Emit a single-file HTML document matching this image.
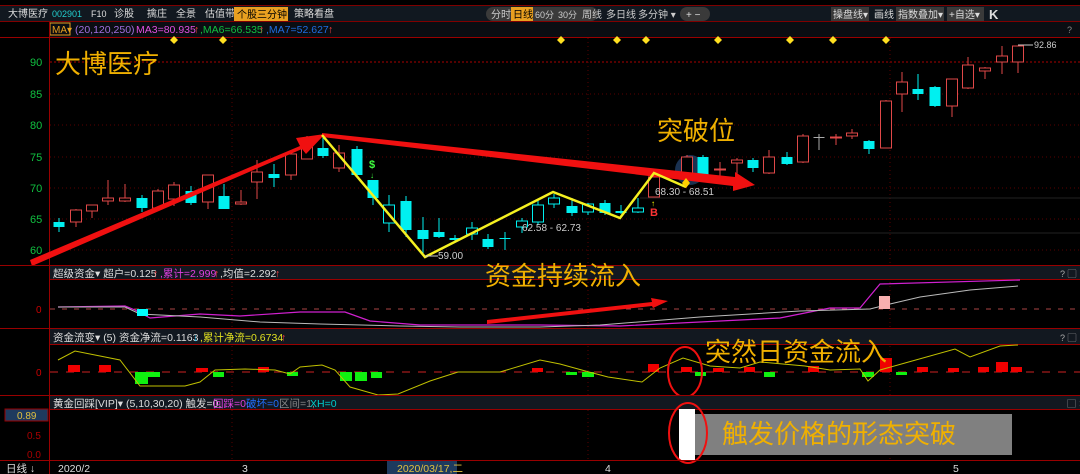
<!DOCTYPE html>
<html><head><meta charset="utf-8"><style>
body{margin:0;background:#000;width:1080px;height:474px;overflow:hidden;font-family:"Liberation Sans","Noto Sans CJK SC",sans-serif}
svg{display:block}
text{font-family:"Liberation Sans","Noto Sans CJK SC",sans-serif}
</style></head><body>
<svg width="1080" height="474" viewBox="0 0 1080 474" xmlns="http://www.w3.org/2000/svg">
<rect width="1080" height="474" fill="#000"/>
<rect x="0" y="5" width="1080" height="17" fill="#111820"/>
<line x1="0" y1="5.5" x2="1080" y2="5.5" stroke="#800000"/>
<line x1="0" y1="21.5" x2="1080" y2="21.5" stroke="#800000"/>
<g font-size="10" fill="#ddd">
<text x="8" y="17">大博医疗</text>
<text x="52" y="17" fill="#2cc" font-size="9">002901</text>
<text x="91" y="17" font-size="9">F10</text>
<text x="114" y="17">诊股</text>
<text x="147" y="17">擒庄</text>
<text x="176" y="17">全景</text>
<text x="205" y="17">估值带</text>
<rect x="234" y="7" width="54" height="14" fill="#e8a020"/>
<text x="237" y="18" fill="#000">个股三分钟</text>
<text x="294" y="17">策略看盘</text>
<rect x="486" y="7" width="112" height="14" rx="7" fill="#3a3a3a"/>
<text x="491" y="18" fill="#ccc">分时</text>
<rect x="511" y="7" width="22" height="14" fill="#e8a020"/>
<text x="513" y="18" fill="#000">日线</text>
<text x="535" y="18" fill="#ccc" font-size="9">60分</text>
<text x="558" y="18" fill="#ccc" font-size="9">30分</text>
<text x="582" y="18" fill="#ccc">周线</text>
<text x="606" y="18" fill="#ccc">多日线</text>
<text x="638" y="18" fill="#ccc">多分钟 ▾</text>
<rect x="680" y="7" width="30" height="14" rx="7" fill="#3a3a3a"/>
<text x="686" y="18" fill="#ddd">+  −</text>
<rect x="831" y="7" width="38" height="14" fill="#3a3a3a"/>
<text x="833" y="18">操盘线▾</text>
<text x="874" y="18">画线</text>
<rect x="896" y="7" width="48" height="14" fill="#3a3a3a"/>
<text x="898" y="18">指数叠加▾</text>
<rect x="947" y="7" width="37" height="14" fill="#3a3a3a"/>
<text x="949" y="18">+自选▾</text>
<text x="989" y="19" font-weight="bold" font-size="13">K</text>
</g>
<rect x="50" y="22" width="1030" height="15" fill="#0a0d12"/>
<rect x="50" y="23" width="20" height="12" fill="none" stroke="#e8a020"/>
<text x="52" y="33" font-size="10" fill="#e8a020">MA▾</text>
<text x="75" y="33" font-size="10.5" fill="#a070e0">(20,120,250)</text>
<text x="136" y="33" font-size="10.5" fill="#e050e0">MA3=80.935</text>
<text x="194" y="33" font-size="10.5" fill="#f44">↑</text>
<text x="200" y="33" font-size="10.5" fill="#10c040">,MA6=66.535</text>
<text x="259" y="33" font-size="10.5" fill="#f44">↑</text>
<text x="266" y="33" font-size="10.5" fill="#1e6ee0">,MA7=52.627</text>
<text x="328" y="33" font-size="10.5" fill="#f44">↑</text>
<text x="1067" y="33" font-size="9" fill="#888">?</text>
<line x1="0" y1="37.5" x2="1080" y2="37.5" stroke="#900"/>
<line x1="49.5" y1="22" x2="49.5" y2="474" stroke="#900"/>
<g stroke="#5a0000" stroke-dasharray="1,3">
<line x1="50" y1="62" x2="1080" y2="62" stroke="#a00" stroke-dasharray="2,2"/>
<line x1="50" y1="94" x2="1080" y2="94"/><line x1="50" y1="125" x2="1080" y2="125"/>
<line x1="50" y1="157" x2="1080" y2="157"/><line x1="50" y1="188" x2="1080" y2="188"/>
<line x1="50" y1="219" x2="1080" y2="219"/><line x1="50" y1="250" x2="1080" y2="250"/>
<line x1="232" y1="38" x2="232" y2="460"/><line x1="588" y1="38" x2="588" y2="460"/><line x1="890" y1="38" x2="890" y2="460"/>
</g>
<line x1="640" y1="198" x2="1080" y2="198" stroke="#222"/>
<line x1="640" y1="233" x2="1080" y2="233" stroke="#222"/>
<g fill="#10c040" font-size="11">
<text x="30" y="66">90</text><text x="30" y="98">85</text><text x="30" y="129">80</text><text x="30" y="161">75</text><text x="30" y="192">70</text><text x="30" y="223">65</text><text x="30" y="254">60</text>
</g>
<g fill="#ffe020">
<path d="M174 36l4 4-4 4-4-4z"/><path d="M223 36l4 4-4 4-4-4z"/><path d="M561 36l4 4-4 4-4-4z"/><path d="M617 36l4 4-4 4-4-4z"/><path d="M646 36l4 4-4 4-4-4z"/><path d="M718 36l4 4-4 4-4-4z"/><path d="M790 36l4 4-4 4-4-4z"/><path d="M833 36l4 4-4 4-4-4z"/><path d="M886 36l4 4-4 4-4-4z"/>
</g>
<circle cx="690" cy="170" r="15" fill="#1e3a5e" opacity="0.85"/>
<g id="candles"></g>
<polygon points="30,260 300,146 296,138 325,134 306,154 302,149 32,266" fill="#f01010"/>
<polygon points="322,133 735,177 735,172 755,185 733,191 733,186 322,137" fill="#f01010"/>
<polyline points="322,135 425,257 553,192 620,218 654,173 686,187" fill="none" stroke="#f5f020" stroke-width="2.5"/>
<text x="55" y="73" font-size="26" fill="#f0b000">大博医疗</text>
<text x="657" y="140" font-size="26" fill="#f0b000">突破位</text>
<text x="655" y="195" font-size="10" fill="#ccc">68.30 - 68.51</text>
<text x="522" y="231" font-size="10" fill="#ccc">62.58 - 62.73</text>
<text x="438" y="259" font-size="10" fill="#ccc">59.00</text>
<line x1="425" y1="256" x2="438" y2="256" stroke="#ccc"/>
<text x="1034" y="48" font-size="9" fill="#ccc">92.86</text>
<line x1="1018" y1="45" x2="1033" y2="45" stroke="#ccc"/>
<text x="369" y="168" font-size="11" font-weight="bold" fill="#40ff40">$</text>
<text x="370" y="178" font-size="8" fill="#40ff40">↓</text>
<text x="650" y="216" font-size="11" font-weight="bold" fill="#f33">B</text>
<text x="651" y="206" font-size="8" fill="#ff0">↑</text>
<path d="M686 178l4 5-4 5-4-5z" fill="#ffd000"/>
<line x1="0" y1="265.5" x2="1080" y2="265.5" stroke="#900"/>
<rect x="50" y="266" width="1030" height="13" fill="#121820"/>
<line x1="50" y1="279.5" x2="1080" y2="279.5" stroke="#900"/>
<g font-size="10.5">
<text x="53" y="277" fill="#ddd">超级资金▾  超户=0.125</text>
<text x="153" y="277" fill="#f44">↑</text>
<text x="160" y="277" fill="#e040e0">,累计=2.999</text>
<text x="214" y="277" fill="#f44">↑</text>
<text x="220" y="277" fill="#ddd">,均值=2.292</text>
<text x="275" y="277" fill="#f44">↑</text>
<text x="1060" y="277" fill="#aaa" font-size="9">? ▢ ✕</text>
</g>
<text x="36" y="313" font-size="10" fill="#c00">0</text>
<line x1="50" y1="309" x2="1080" y2="309" stroke="#a44" stroke-dasharray="5,7"/>
<polyline points="58,307 125,306 135,310 150,318 200,314 240,316 300,312 345,312 370,321 420,325 480,325 540,325 620,326 700,322 780,318 830,308 850,308 860,308 880,284 1020,280" fill="none" stroke="#d020d0" stroke-width="1.2"/>
<polyline points="58,307 125,307 140,314 200,317 260,322 320,324 400,326 460,327 540,327 600,325 700,317 800,311 870,309 890,304 920,297 970,290 1018,286" fill="none" stroke="#bbb" stroke-width="1"/>
<rect x="137" y="309" width="11" height="7" fill="#0ff"/>
<rect x="879" y="296" width="11" height="13" fill="#f8b0b0"/>
<polygon points="487,320 652,302 651,298 668,301 653,308 652,306 487,324" fill="#f01010"/>
<text x="485" y="285" font-size="26" fill="#f0b000">资金持续流入</text>
<line x1="0" y1="328.5" x2="1080" y2="328.5" stroke="#900"/>
<rect x="50" y="329" width="1030" height="15" fill="#121820"/>
<line x1="50" y1="344.5" x2="1080" y2="344.5" stroke="#900"/>
<g font-size="10.5">
<text x="53" y="341" fill="#ddd">资金流变▾  (5)  资金净流=0.1163</text>
<text x="193" y="341" fill="#2cf">↓</text>
<text x="200" y="341" fill="#e0e020">,累计净流=0.6734</text>
<text x="281" y="341" fill="#f44">↑</text>
<text x="1060" y="341" fill="#aaa" font-size="9">? ▢ ✕</text>
</g>
<text x="36" y="376" font-size="10" fill="#c00">0</text>
<line x1="50" y1="372" x2="1080" y2="372" stroke="#c22" stroke-dasharray="8,8"/>
<g fill="#f00000">
<rect x="68" y="365" width="12" height="7"/><rect x="99" y="365" width="12" height="7"/><rect x="196" y="368" width="12" height="4"/><rect x="258" y="367" width="11" height="5"/><rect x="532" y="368" width="11" height="4"/><rect x="648" y="364" width="11" height="8"/><rect x="681" y="367" width="11" height="5"/><rect x="713" y="368" width="11" height="4"/><rect x="744" y="367" width="11" height="5"/><rect x="808" y="366" width="11" height="6"/><rect x="880" y="358" width="12" height="14"/><rect x="917" y="367" width="11" height="5"/><rect x="948" y="368" width="11" height="4"/><rect x="978" y="367" width="11" height="5"/><rect x="996" y="362" width="12" height="10"/><rect x="1011" y="367" width="11" height="5"/>
</g>
<g fill="#10f010">
<rect x="135" y="372" width="13" height="12"/><rect x="148" y="372" width="12" height="5"/><rect x="213" y="372" width="11" height="5"/><rect x="287" y="372" width="11" height="4"/><rect x="340" y="372" width="12" height="9"/><rect x="355" y="372" width="12" height="9"/><rect x="371" y="372" width="11" height="6"/><rect x="566" y="372" width="11" height="3"/><rect x="582" y="372" width="12" height="5"/><rect x="695" y="372" width="11" height="4"/><rect x="764" y="372" width="11" height="5"/><rect x="862" y="372" width="12" height="5"/><rect x="896" y="372" width="11" height="3"/>
</g>
<polyline points="58,360 75,351 120,360 140,386 185,386 200,382 215,370 245,369 275,370 290,374 300,367 322,365 335,370 350,387 378,395 398,394 430,381 458,372 500,372 540,360 560,364 589,372 608,377 642,382 660,368 683,358 710,366 740,368 760,362 805,366 830,370 860,369 868,381 880,370 905,363 955,349 970,357 1000,346 1018,345" fill="none" stroke="#c0c000" stroke-width="1"/>
<ellipse cx="685" cy="372" rx="17" ry="25" fill="none" stroke="#f01010" stroke-width="2"/>
<text x="705" y="361" font-size="26" fill="#f0b000">突然日资金流入</text>
<line x1="0" y1="395.5" x2="1080" y2="395.5" stroke="#900"/>
<rect x="50" y="396" width="1030" height="13" fill="#121820"/>
<line x1="50" y1="409.5" x2="1080" y2="409.5" stroke="#900"/>
<g font-size="10.5">
<text x="53" y="407" fill="#ddd">黄金回踩[VIP]▾  (5,10,30,20)  触发=0,</text>
<text x="213" y="407" fill="#e040e0">回踩=0,</text>
<text x="246" y="407" fill="#2070ff">破坏=0,</text>
<text x="279" y="407" fill="#888">区间=1,</text>
<text x="310" y="407" fill="#0cc">XH=0</text>
<text x="1067" y="407" fill="#aaa" font-size="9">▢ ✕</text>
</g>
<rect x="5" y="409" width="43" height="12" fill="#1e3a5e" stroke="#900"/>
<text x="17" y="419" font-size="10" fill="#e0c040">0.89</text>
<text x="27" y="439" font-size="10" fill="#a00">0.5</text>
<text x="27" y="458" font-size="10" fill="#a00">0.0</text>
<rect x="690" y="414" width="322" height="41" fill="#808080"/>
<text x="722" y="443" font-size="26" fill="#f0b000">触发价格的形态突破</text>
<rect x="679" y="409" width="16" height="51" fill="#fff"/>
<ellipse cx="688" cy="433" rx="19" ry="30" fill="none" stroke="#f01010" stroke-width="2"/>
<line x1="0" y1="460.5" x2="1080" y2="460.5" stroke="#900"/>
<rect x="387" y="461" width="70" height="13" fill="#1e3a5e"/>
<g font-size="10.5" fill="#ddd">
<text x="6" y="472">日线 ↓</text>
<text x="58" y="472">2020/2</text>
<text x="242" y="472">3</text>
<text x="397" y="472" fill="#e0c040">2020/03/17,二</text>
<text x="605" y="472">4</text>
<text x="953" y="472">5</text>
</g>
</svg>
<script>
var C=[[59,222,227,218,232,'c'],[76,210,222,209,227,'r'],[92,205,211,205,218,'r'],[108,198,201,180,205,'r'],[125,198,201,184,202,'r'],[142,198,208,195,212,'c'],[158,191,208,189,210,'r'],[174,185,199,182,206,'r'],[191,191,203,186,205,'c'],[208,175,202,175,209,'r'],[224,196,209,184,209,'c'],[241,202,204,190,205,'r'],[257,172,182,160,199,'r'],[274,174,178,164,187,'c'],[291,154,175,154,180,'r'],[307,143,159,136,159,'r'],[323,148,156,137,158,'c'],[339,153,168,145,172,'r'],[357,149,175,146,175,'c'],[373,180,198,180,205,'c'],[389,205,223,195,232,'h'],[406,201,230,196,237,'c'],[423,230,239,217,256,'c'],[439,232,237,218,238,'c'],[455,238,240,235,241,'c'],[472,228,234,222,240,'h'],[488,239,247,234,249,'c'],[505,238,239,232,250,'c'],[522,221,227,218,233,'h'],[538,205,222,200,225,'h'],[554,198,204,194,208,'h'],[572,206,213,198,216,'c'],[588,204,212,203,215,'h'],[605,203,213,200,215,'c'],[621,211,213,205,214,'c'],[638,208,212,198,213,'h'],[654,177,197,170,197,'r'],[687,157,173,155,175,'r'],[703,157,175,155,178,'c'],[720,169,170,162,176,'r'],[737,160,163,158,177,'r'],[753,160,168,158,172,'c'],[769,157,173,150,174,'r'],[787,157,164,152,165,'c'],[803,136,162,134,163,'r'],[819,137,138,134,150,'g'],[836,137,138,134,145,'r'],[852,133,136,129,139,'r'],[869,141,149,140,154,'c'],[886,101,148,100,148,'r'],[902,82,94,72,112,'r'],[918,89,94,74,100,'c'],[935,87,106,86,107,'c'],[952,79,106,79,117,'r'],[968,65,88,57,89,'r'],[985,68,71,67,79,'r'],[1002,56,62,46,74,'r'],[1018,46,62,46,73,'r']];
var g=document.getElementById('candles'),s='';
C.forEach(function(c){var x=c[0],col=c[5]=='r'?'#e04848':c[5]=='g'?'#aaa':'#00f0f0';
s+='<line x1="'+x+'" y1="'+c[3]+'" x2="'+x+'" y2="'+c[4]+'" stroke="'+col+'"/>';
var h=Math.max(1,c[2]-c[1]);
if(c[5]=='c'||c[5]=='g')s+='<rect x="'+(x-5.5)+'" y="'+c[1]+'" width="11" height="'+h+'" fill="'+col+'"/>';
else s+='<rect x="'+(x-5.5)+'" y="'+c[1]+'" width="11" height="'+h+'" fill="#000" stroke="'+col+'"/>';});
g.innerHTML=s;
</script>
</body></html>
